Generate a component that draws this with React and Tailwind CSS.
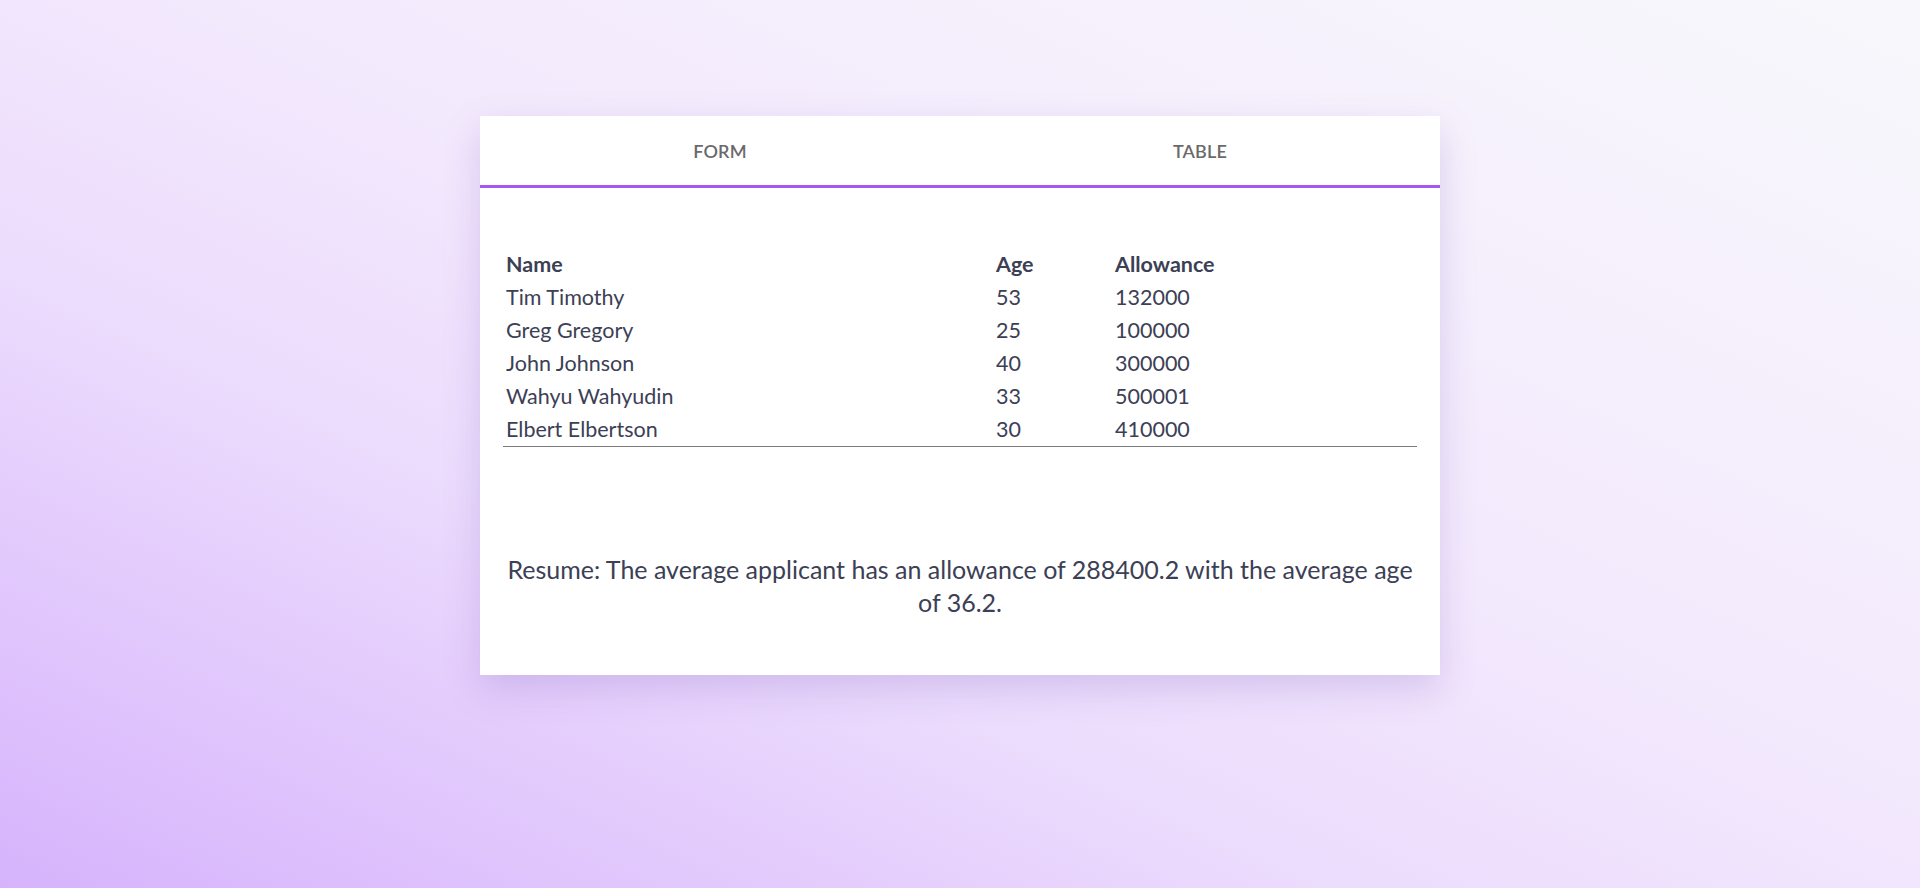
import { useState } from "react";

const rows = [
  { name: "Tim Timothy", age: 53, allowance: 132000 },
  { name: "Greg Gregory", age: 25, allowance: 100000 },
  { name: "John Johnson", age: 40, allowance: 300000 },
  { name: "Wahyu Wahyudin", age: 33, allowance: 500001 },
  { name: "Elbert Elbertson", age: 30, allowance: 410000 },
];

export default function App() {
  const [tab, setTab] = useState("table");

  const avgAllowance =
    rows.reduce((sum, r) => sum + r.allowance, 0) / rows.length;
  const avgAge = rows.reduce((sum, r) => sum + r.age, 0) / rows.length;
  const resume = `Resume: The average applicant has an allowance of ${avgAllowance} with the average age of ${avgAge}.`;

  return (
    <div
      className="min-h-screen w-full bg-[linear-gradient(to_top_right,#d6b3fc_0%,#ecdcfd_35%,#f3e9fd_55%,#f8f8fc_100%)] pt-[116px]"
      style={{ fontFamily: "Lato, 'Noto Sans', sans-serif" }}
    >
      <div className="mx-auto w-[960px] bg-white shadow-[0_14px_34px_rgba(120,80,180,0.22)]">
        {/* tabs */}
        <div className="flex h-[72px] border-b-[3px] border-[#a259ee]">
          <button
            onClick={() => setTab("form")}
            className="flex-1 pt-[2px] text-[18px] font-semibold uppercase tracking-[0.2px] text-[#6a6a6a]"
          >
            Form
          </button>
          <button
            onClick={() => setTab("table")}
            className="flex-1 pt-[2px] text-[18px] font-semibold uppercase tracking-[0.2px] text-[#6a6a6a]"
          >
            Table
          </button>
        </div>

        <div className="px-[23px] pt-[60px] pb-[56px] text-[#3c4055]">
          <table className="w-full table-fixed border-collapse border-b border-[#7c7c7c] text-left text-[21.5px]">
            <colgroup>
              <col className="w-[490px]" />
              <col className="w-[119px]" />
              <col />
            </colgroup>
            <thead>
              <tr className="h-[33px]">
                <th className="px-[3px] font-bold">Name</th>
                <th className="px-[3px] font-bold">Age</th>
                <th className="px-[3px] font-bold">Allowance</th>
              </tr>
            </thead>
            <tbody>
              {rows.map((r) => (
                <tr key={r.name} className="h-[33px]">
                  <td className="px-[3px]">{r.name}</td>
                  <td className="px-[3px]">{r.age}</td>
                  <td className="px-[3px]">{r.allowance}</td>
                </tr>
              ))}
            </tbody>
          </table>

          <p className="mx-auto mt-[106px] max-w-[910px] text-center text-[25px] leading-[33px]">
            {resume}
          </p>
        </div>
      </div>
    </div>
  );
}
